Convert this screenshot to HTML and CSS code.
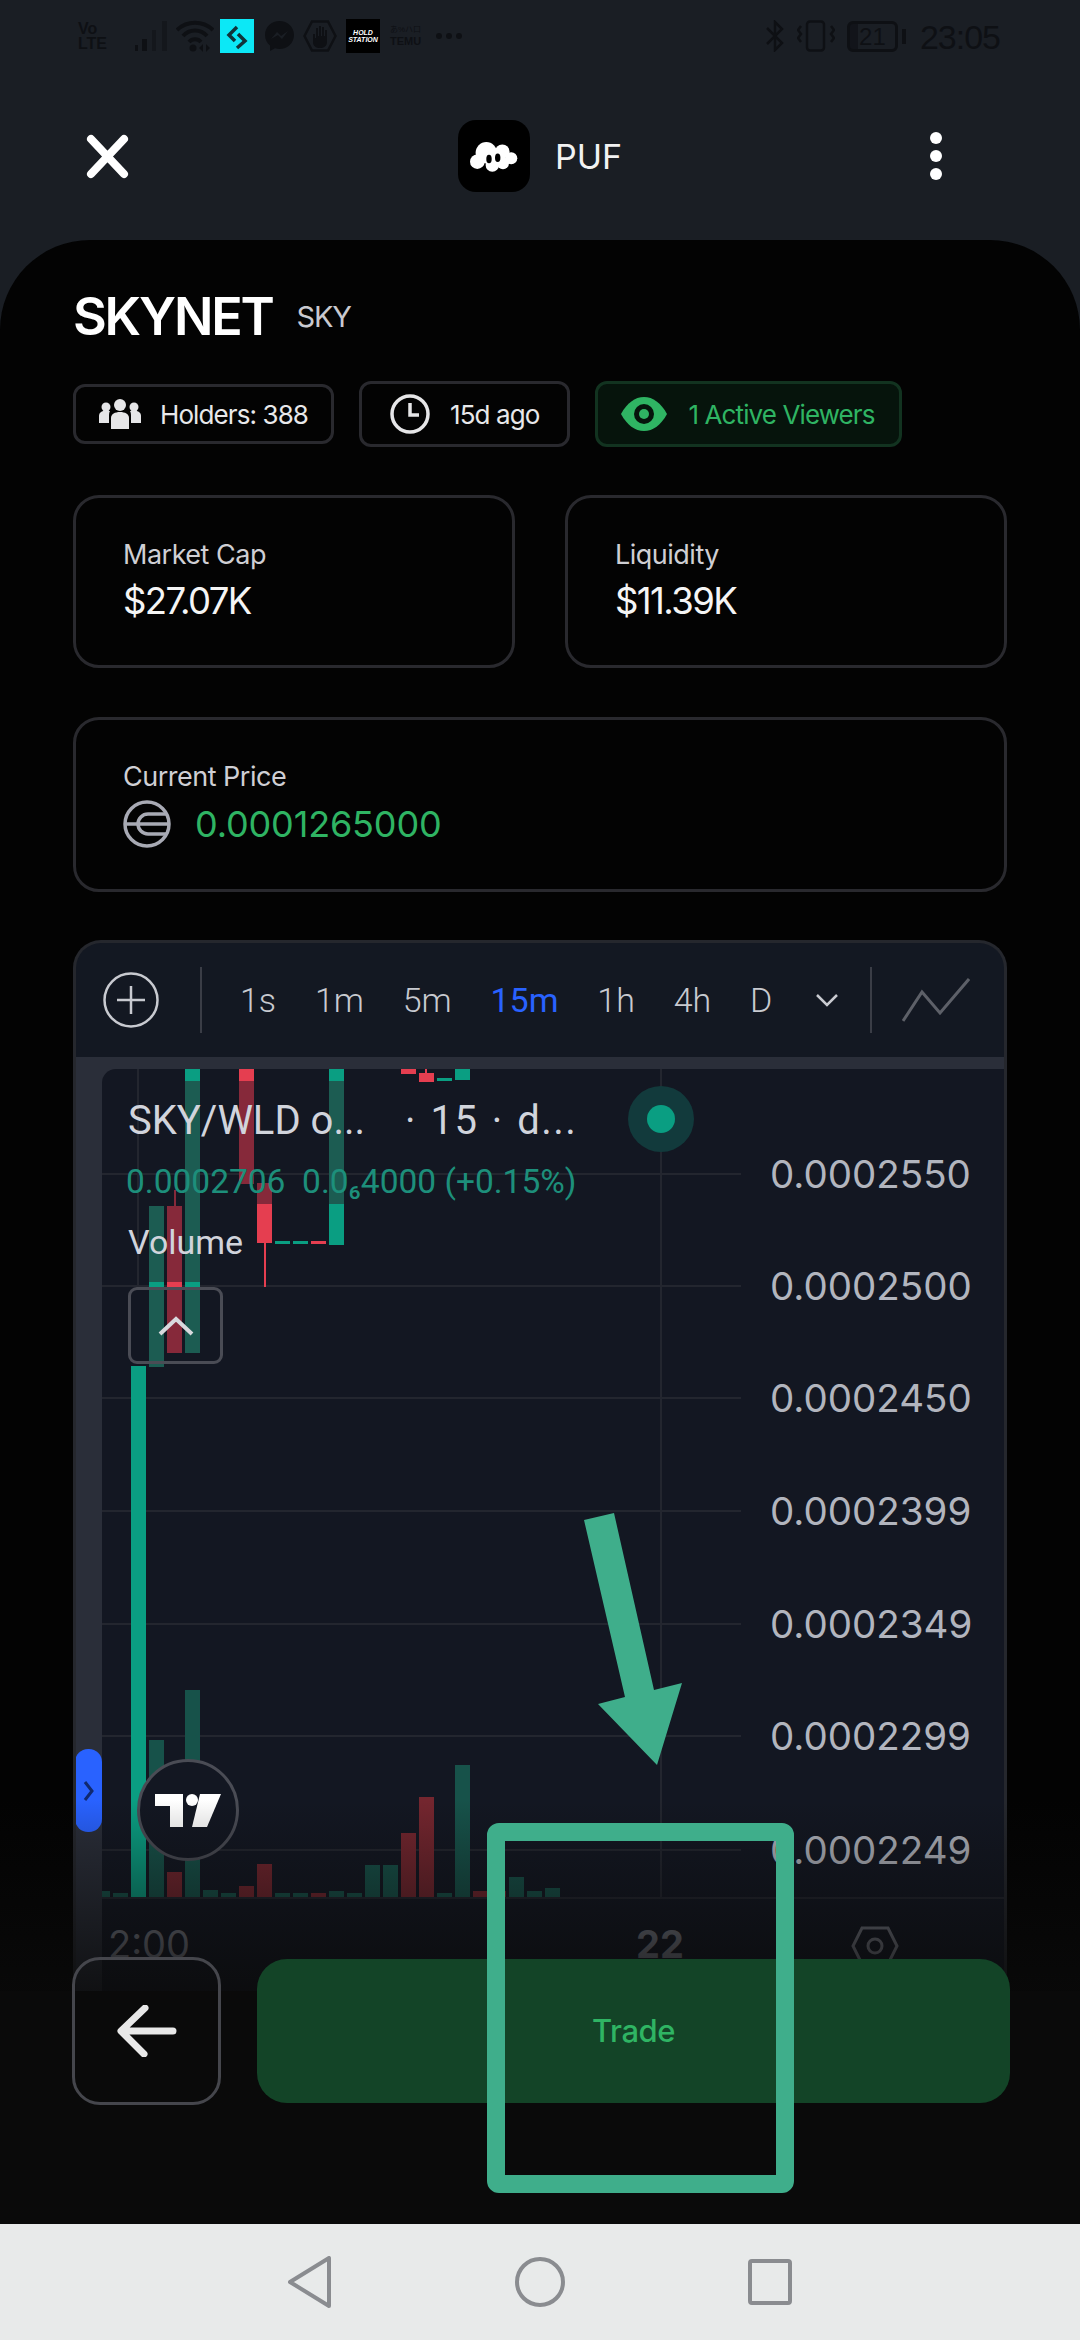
FILE: index.html
```html
<!DOCTYPE html>
<html>
  <head>
    <meta charset="utf-8" />
    <title>SKYNET</title>
    <link rel="stylesheet" href="styles.css">
  </head>
  <body>
    <div class="phone">
      <div class="status-bar">
        <div class="status-left">
          <div class="volte">Vo<br>LTE</div>
          <svg class="st-signal" width="32" height="30" viewBox="0 0 32 30"><path d="M0 24h3v6H0zM7 18h5v12H7z" fill="#0e1014"/><path d="M17 9h4v21h-4zM27 0h5v30h-5z" fill="#14171c"/></svg>
          <svg class="st-wifi" width="38" height="32" viewBox="0 0 38 32"><path d="M1 10a26 26 0 0 1 36 0M7 16a16 16 0 0 1 24 0M13 22a8 8 0 0 1 12 0" fill="none" stroke="#0e1014" stroke-width="4"/><circle cx="17" cy="28" r="3.500" fill="#0e1014"/><path d="M27 24v8l-4-4zM30 24v8l4-4z" fill="#0e1014"/></svg>
          <div class="app-tile tile-cyan">
            <svg width="34" height="34" viewBox="0 0 34 34"><path d="M17 8l-8 8 6 6M18 15l7 7-8 7" fill="none" stroke="#10343a" stroke-width="3.500"/></svg>
          </div>
          <svg width="29" height="31" viewBox="0 0 29 31"><path d="M14.500 0C6.500 0 0 6 0 14c0 4.500 2 8 5 10.500V30l5-2.700c1.400.4 2.900.7 4.500.7C22.500 28 29 22 29 14S22.500 0 14.500 0z" fill="#0e1014"/><path d="M6 18l6-7 4 4 7-5-6 8-4-4z" fill="#1a1e24"/></svg>
          <svg width="34" height="32" viewBox="0 0 34 32"><path d="M9 1.500h16L32.500 16 25 30.500H9L1.500 16z" fill="none" stroke="#0e1014" stroke-width="2.500"/><path d="M10 14v8c0 4 3 6 7 6s7-2 7-6V10h-2v6h-1V7h-2v9h-1V6h-2v10h-1V8h-2v10h-1v-4z" fill="#0e1014"/></svg>
          <div class="app-tile tile-black">HOLD<br>STATION</div>
          <div class="temu"><span>あ%ハ口</span><b>TEMU</b></div>
          <div class="more-dots"><i></i><i></i><i></i></div>
        </div>
        <div class="status-right">
          <svg width="20" height="32" viewBox="0 0 20 32"><path d="M2 8l15 15-7 7V2l7 7L2 24" fill="none" stroke="#0e1014" stroke-width="2.500"/></svg>
          <svg width="38" height="32" viewBox="0 0 38 32"><rect x="10" y="1.500" width="17" height="29" rx="3" fill="none" stroke="#0e1014" stroke-width="2.500"/><path d="M4 6l-3 4 3 4-3 4 3 4M34 6l3 4-3 4 3 4-3 4" fill="none" stroke="#0e1014" stroke-width="2.500"/></svg>
          <div class="battery"><span class="battery-body">21</span><span class="battery-tip"></span></div>
          <div class="clock">23:05</div>
        </div>
      </div>

      <header class="app-header">
        <svg class="close-icon" width="45" height="45" viewBox="0 0 45 45"><path d="M6 5l33 35M39 5L6 40" stroke="#fff" stroke-width="8" stroke-linecap="round"/></svg>
        <div class="app-name">
          <div class="app-logo">
            <svg width="48" height="32" viewBox="0 0 48 32">
              <g fill="#fff">
                <circle cx="16.300" cy="12.700" r="10.700"/><circle cx="32.300" cy="11.700" r="7.300"/><circle cx="41.300" cy="18.300" r="6"/>
                <circle cx="7.300" cy="21.700" r="7.300"/><circle cx="22.300" cy="25" r="6.700"/><circle cx="33" cy="23.300" r="6"/><circle cx="25" cy="18" r="8"/>
              </g>
              <ellipse cx="19" cy="19" rx="2.700" ry="4.300" fill="#000"/>
              <ellipse cx="27.700" cy="17.700" rx="2.700" ry="4.300" fill="#000"/>
            </svg>
          </div>
          <span class="app-title">PUF</span>
        </div>
        <div class="kebab"><i></i><i></i><i></i></div>
      </header>

      <main class="sheet">
        <div class="title-row">
          <h1 class="token-name">SKYNET</h1>
          <span class="token-symbol">SKY</span>
        </div>

        <div class="chips">
          <div class="chip chip-small">
            <svg width="42" height="30" viewBox="0 0 42 30"><g fill="#e6e6e8"><circle cx="21" cy="6" r="6"/><circle cx="7" cy="8" r="4.500"/><circle cx="35" cy="8" r="4.500"/><path d="M12 30V19c0-4 4-6 9-6s9 2 9 6v11z"/><path d="M10 24H0v-7c0-3 2-5 6-5h5c-1 2-1 3-1 6zM32 24h10v-7c0-3-2-5-6-5h-5c1 2 1 3 1 6z"/></g></svg>
            <span>Holders: 388</span>
          </div>
          <div class="chip chip-time">
            <svg width="40" height="40" viewBox="0 0 40 40"><circle cx="20" cy="20" r="18" fill="none" stroke="#e6e6e8" stroke-width="3.500"/><path d="M20 9v12h9" fill="none" stroke="#e6e6e8" stroke-width="3.500"/></svg>
            <span>15d ago</span>
          </div>
          <div class="chip chip-live">
            <svg width="46" height="34" viewBox="0 0 46 34"><path d="M0 17C6 6 14 0 23 0s17 6 23 17c-6 11-14 17-23 17S6 28 0 17z" fill="#2fb463"/><circle cx="23" cy="17" r="10" fill="#06140c"/><circle cx="23" cy="17" r="5" fill="#2fb463"/></svg>
            <span>1 Active Viewers</span>
          </div>
        </div>

        <div class="stats">
          <div class="stat-card">
            <div class="stat-label">Market Cap</div>
            <div class="stat-value">$27.07K</div>
          </div>
          <div class="stat-card">
            <div class="stat-label">Liquidity</div>
            <div class="stat-value">$11.39K</div>
          </div>
        </div>

        <div class="stat-card price-card">
          <div class="stat-label">Current Price</div>
          <div class="price-row">
            <svg width="48" height="48" viewBox="0 0 48 48"><g fill="none" stroke="#a8aab4" stroke-width="3.500"><circle cx="24" cy="24" r="22"/><path d="M43 14H25a10 10 0 0 0 0 20h18M2 24h44"/></g></svg>
            <span class="price-value">0.0001265000</span>
          </div>
        </div>

        <section class="chart-card">
          <div class="chart-toolbar">
            <svg class="tb-plus" width="56" height="56" viewBox="0 0 56 56"><circle cx="28" cy="28" r="26.500" fill="none" stroke="#c8cad0" stroke-width="2.500"/><path d="M28 14v28M14 28h28" stroke="#c8cad0" stroke-width="2.500"/></svg>
            <i class="tb-divider"></i>
            <div class="intervals">
              <span>1s</span>
              <span>1m</span>
              <span>5m</span>
              <span class="active">15m</span>
              <span>1h</span>
              <span>4h</span>
              <span>D</span>
            </div>
            <svg class="tb-caret" width="24" height="14" viewBox="0 0 24 14"><path d="M2 2l10 10L22 2" fill="none" stroke="#c8cad0" stroke-width="2.500"/></svg>
            <i class="tb-divider tb-divider-2"></i>
            <svg class="tb-line" width="68" height="44" viewBox="0 0 68 44"><path d="M1 43L20 14l18 21L67 1" fill="none" stroke="#5d6068" stroke-width="3"/></svg>
          </div>

          <div class="chart-body">
            <div class="chart-canvas">
              <svg class="plot" width="905" height="921" viewBox="102 1069 905 921">
                <g class="grid">
                  <path d="M102 1174H741M102 1286H741M102 1398H741M102 1511H741M102 1624H741M102 1736H741M102 1850H741"/>
                  <path d="M138 1069V1286M661 1069V1898"/>
                  <path d="M102 1898H1005M1005 1069V1990"/>
                </g>

                <g class="dim-up">
                  <rect x="149" y="1206" width="15" height="76"/><rect x="149" y="1288" width="15" height="79"/>
                  <rect x="185" y="1081" width="15" height="201"/><rect x="185" y="1288" width="15" height="65"/>
                  <rect x="329" y="1081" width="15" height="123"/>
                </g>
                <g class="dim-down">
                  <rect x="167" y="1206" width="15" height="76"/><rect x="167" y="1288" width="15" height="65"/>
                  <rect x="239" y="1081" width="15" height="103"/><rect x="257" y="1183" width="15" height="21"/>
                  <rect x="174" y="1190" width="2" height="16"/>
                </g>
                <g class="up">
                  <rect x="131" y="1366" width="15" height="531"/>
                  <rect x="149" y="1282" width="15" height="6"/><rect x="185" y="1282" width="15" height="6"/>
                  <rect x="185" y="1069" width="15" height="12"/><rect x="329" y="1069" width="15" height="12"/>
                  <rect x="329" y="1204" width="15" height="41"/>
                  <rect x="275" y="1241" width="15" height="3"/><rect x="293" y="1241" width="15" height="3"/>
                  <rect x="437" y="1078" width="15" height="3"/><rect x="455" y="1069" width="15" height="11"/>
                </g>
                <g class="down">
                  <rect x="167" y="1282" width="15" height="6"/><rect x="239" y="1069" width="15" height="12"/>
                  <rect x="257" y="1204" width="15" height="39"/><rect x="264" y="1243" width="2" height="44"/>
                  <rect x="311" y="1241" width="15" height="3"/>
                  <rect x="401" y="1069" width="15" height="5"/><rect x="419" y="1073" width="15" height="9"/>
                  <rect x="425" y="1069" width="2" height="4"/>
                </g>

                <g class="vol-up">
                  <rect x="102" y="1891" width="8" height="6"/><rect x="113" y="1893" width="15" height="4"/>
                  <rect x="149" y="1740" width="15" height="157"/><rect x="185" y="1690" width="15" height="207"/>
                  <rect x="203" y="1890" width="15" height="7"/><rect x="221" y="1893" width="15" height="4"/>
                  <rect x="275" y="1893" width="15" height="4"/><rect x="293" y="1893" width="15" height="4"/>
                  <rect x="329" y="1891" width="15" height="6"/><rect x="347" y="1893" width="15" height="4"/>
                  <rect x="365" y="1865" width="15" height="32"/><rect x="383" y="1865" width="15" height="32"/>
                  <rect x="437" y="1893" width="15" height="4"/><rect x="455" y="1765" width="15" height="132"/>
                  <rect x="509" y="1877" width="15" height="20"/><rect x="527" y="1891" width="15" height="6"/>
                  <rect x="545" y="1888" width="15" height="9"/>
                </g>
                <g class="vol-down">
                  <rect x="167" y="1872" width="15" height="25"/><rect x="239" y="1886" width="15" height="11"/>
                  <rect x="257" y="1864" width="15" height="33"/><rect x="311" y="1893" width="15" height="4"/>
                  <rect x="401" y="1833" width="15" height="64"/><rect x="419" y="1797" width="15" height="100"/>
                  <rect x="473" y="1891" width="15" height="6"/><rect x="491" y="1891" width="15" height="6"/>
                </g>

                <circle cx="661" cy="1119" r="33" class="dot-halo"/>
                <circle cx="661" cy="1119" r="14" class="dot-core"/>

                <g class="price-axis">
                  <text x="770" y="1188">0.0002550</text>
                  <text x="770" y="1300">0.0002500</text>
                  <text x="770" y="1412">0.0002450</text>
                  <text x="770" y="1525">0.0002399</text>
                  <text x="770" y="1638">0.0002349</text>
                  <text x="770" y="1750">0.0002299</text>
                  <text x="770" y="1864">0.0002249</text>
                </g>
                <text class="time-label" x="108" y="1958">2:00</text>
                <text class="time-label time-bold" x="660" y="1958" text-anchor="middle">22</text>
                <g class="axis-gear">
                  <path d="M862 1928h26l9 18-9 18h-26l-9-18z"/>
                  <circle cx="875" cy="1946" r="7"/>
                </g>
              </svg>

              <div class="legend">
                <div class="legend-title"><span>SKY/WLD o...</span><span class="legend-interval">· 15 · d...</span></div>
                <div class="legend-values">0.0002706&nbsp; 0.0₆4000 (+0.15%)</div>
                <div class="legend-volume">Volume</div>
                <div class="legend-toggle">
                  <svg width="36" height="20" viewBox="0 0 36 20"><path d="M2 18L18 3l16 15" fill="none" stroke="#d8d9de" stroke-width="4"/></svg>
                </div>
              </div>

              <div class="tv-badge">
                <svg width="66" height="34" viewBox="0 0 66 34"><path d="M0 1h28v33H15V13H0z" fill="#fff"/><circle cx="37" cy="7" r="6" fill="#fff"/><path d="M45 1h21L52 34H37z" fill="#fff"/></svg>
              </div>
            </div>
            <div class="side-handle">
              <svg width="12" height="22" viewBox="0 0 12 22"><path d="M2 2l7 9-7 9" fill="none" stroke="#10296f" stroke-width="3"/></svg>
            </div>
          </div>
        </section>
      </main>

      <div class="bottom-bar">
        <button class="back-button">
          <svg width="60" height="52" viewBox="0 0 60 52"><path d="M56 26H5M28 3L4 26l23 23" fill="none" stroke="#e8e8e8" stroke-width="7" stroke-linecap="round" stroke-linejoin="round"/></svg>
        </button>
        <button class="trade-button">Trade</button>
      </div>

      <svg class="annotation" width="1080" height="2340" viewBox="0 0 1080 2340">
        <rect x="496" y="1832" width="289" height="352" rx="3" fill="none" stroke="#3fae8b" stroke-width="18" stroke-linejoin="round"/>
        <path d="M584 1520L614 1513L654 1690L682 1683L657 1765L598 1704L625 1697z" fill="#3fae8b"/>
      </svg>

      <nav class="nav-bar">
        <svg width="44" height="52" viewBox="0 0 44 52"><path d="M41 2v48L2 26z" fill="none" stroke="#8a8c90" stroke-width="4" stroke-linejoin="round"/></svg>
        <svg width="50" height="50" viewBox="0 0 50 50"><circle cx="25" cy="25" r="23" fill="none" stroke="#8a8c90" stroke-width="4"/></svg>
        <svg width="44" height="46" viewBox="0 0 44 46"><rect x="2" y="2" width="40" height="42" rx="2" fill="none" stroke="#8a8c90" stroke-width="4"/></svg>
      </nav>
    </div>
  </body>
</html>
```

FILE: styles.css
```css
* {
  box-sizing: border-box;
}
html, body {
  margin: 0;
  padding: 0;
  background: #000;
}
.phone {
  position: relative;
  width: 1080px;
  height: 2340px;
  overflow: hidden;
  display: flex;
  flex-direction: column;
  background: #1a1e24;
  font-family: Inter, "Liberation Sans", sans-serif;
  color: #fff;
}

/* status bar, dimmed by the sheet's backdrop */
.status-bar {
  height: 72px;
  flex: none;
  display: flex;
  justify-content: space-between;
  align-items: center;
  padding: 0 80px 0 78px;
  color: #0e1014;
}
.status-left,
.status-right {
  display: flex;
  align-items: center;
}
.status-left {
  gap: 9px;
}
.status-right {
  gap: 12px;
}
.volte {
  width: 28px;
  font-family: "Liberation Sans", sans-serif;
  font-size: 16px;
  line-height: 15px;
  font-weight: 700;
  margin-right: 20px;
}
.st-wifi {
  margin-right: -3px;
}
.app-tile {
  width: 34px;
  height: 34px;
  flex: none;
}
.tile-cyan {
  background: #0ce8f6;
  margin-right: 2px;
}
.tile-black {
  background: #000;
  color: #fff;
  font-family: "Liberation Sans", sans-serif;
  font-size: 7px;
  font-weight: 700;
  font-style: italic;
  line-height: 7px;
  padding-top: 10px;
  text-align: center;
  white-space: nowrap;
}
.temu {
  width: 33px;
  display: flex;
  flex-direction: column;
  align-items: center;
  font-family: "Liberation Sans", "Noto Sans CJK JP", sans-serif;
  white-space: nowrap;
}
.temu span {
  font-size: 8px;
  line-height: 10px;
}
.temu b {
  font-size: 11px;
  line-height: 12px;
}
.more-dots {
  display: flex;
  gap: 4px;
  margin-left: 5px;
}
.more-dots i {
  width: 6px;
  height: 6px;
  border-radius: 50%;
  background: #0e1014;
}
.battery {
  display: flex;
  align-items: center;
  gap: 4px;
}
.battery-body {
  width: 51px;
  height: 31px;
  border: 3px solid #0e1014;
  border-radius: 6px;
  font-size: 24px;
  line-height: 25px;
  text-align: center;
  font-family: "Liberation Sans", sans-serif;
  background: linear-gradient(to right, #12141a 0, #12141a 8px, transparent 8px);
}
.battery-tip {
  width: 4px;
  height: 15px;
  background: #0e1014;
}
.clock {
  font-family: "Liberation Sans", sans-serif;
  font-size: 34px;
  letter-spacing: -1px;
  margin-left: 2px;
  padding-top: 2px;
}

.app-header {
  height: 168px;
  flex: none;
  display: grid;
  grid-template-columns: 1fr auto 1fr;
  align-items: center;
  padding: 0 85px;
}
.app-name {
  display: flex;
  align-items: center;
  gap: 25px;
}
.app-logo {
  width: 72px;
  height: 72px;
  background: #000;
  border-radius: 18px;
  display: flex;
  align-items: center;
  justify-content: center;
}
.app-title {
  font-size: 34px;
  color: #f2f2f2;
}
.kebab {
  justify-self: end;
  margin-right: 53px;
  display: flex;
  flex-direction: column;
  gap: 6px;
}
.kebab i {
  display: block;
  width: 12px;
  height: 12px;
  border-radius: 50%;
  background: #fff;
}

.sheet {
  flex: 1;
  min-height: 0;
  background: #030303;
  border-radius: 90px 90px 0 0;
  padding: 48px 73px 0;
  display: flex;
  flex-direction: column;
}
.title-row {
  height: 56px;
  display: flex;
  align-items: center;
  gap: 24px;
}
.token-name {
  margin: 0;
  font-size: 52px;
  font-weight: 600;
  letter-spacing: -2.200px;
}
.token-symbol {
  font-size: 29px;
  color: #c9c9cf;
  letter-spacing: -1.200px;
}

.chips {
  margin-top: 37px;
  height: 66px;
  display: flex;
  align-items: center;
  gap: 25px;
}
.chip {
  height: 66px;
  display: flex;
  align-items: center;
  padding: 0 28px;
  border: 3px solid #29292e;
  border-radius: 12px;
  font-size: 26px;
  letter-spacing: -0.900px;
  color: #e8e8ea;
}
.chip-small {
  height: 60px;
  gap: 19px;
  padding: 0 23px;
}
.chip-time {
  gap: 20px;
}
.chip-live {
  gap: 21px;
  padding: 0 24px 0 23px;
  border-color: #123320;
  background: #06140c;
  color: #2fb463;
}

.stats {
  margin-top: 48px;
  display: grid;
  grid-template-columns: 1fr 1fr;
  gap: 50px;
}
.stat-card {
  height: 173px;
  border: 3px solid #29292e;
  border-radius: 26px;
  padding: 40px 47px 0;
}
.stat-label {
  font-size: 27px;
  line-height: 34px;
  color: #cfcfd4;
  letter-spacing: -0.500px;
}
.stat-value {
  font-size: 36.500px;
  line-height: 58px;
  letter-spacing: -1.600px;
  color: #f5f5f5;
}
.price-card {
  margin-top: 49px;
  height: 175px;
}
.price-row {
  display: flex;
  align-items: center;
  gap: 24px;
  margin-top: 6px;
}
.price-value {
  font-size: 36px;
  color: #2fb463;
  letter-spacing: -0.150px;
}

/* chart widget */
.chart-card {
  margin-top: 48px;
  flex: 1;
  min-height: 0;
  background: #131822;
  border: 3px solid #25272d;
  border-bottom: none;
  border-radius: 28px 28px 0 0;
  display: flex;
  flex-direction: column;
  overflow: hidden;
}
.chart-toolbar {
  height: 114px;
  flex: none;
  display: flex;
  align-items: center;
  padding-left: 27px;
  color: #c8cad0;
}
.tb-divider {
  width: 2px;
  height: 66px;
  background: #3a3d46;
  margin-left: 41px;
}
.intervals {
  display: flex;
  gap: 38.800px;
  margin-left: 38px;
  font-family: Roboto, sans-serif;
  font-size: 34px;
  font-weight: 300;
}
.intervals .active {
  color: #2962ff;
  font-weight: 400;
}
.tb-caret {
  margin-left: 43px;
}
.tb-divider-2 {
  margin-left: 31px;
}
.tb-line {
  margin-left: 30px;
}
.chart-body {
  flex: 1;
  min-height: 0;
  position: relative;
  background: #2a2e39;
  padding: 12px 0 0 26px;
}
.chart-canvas {
  position: relative;
  height: 100%;
  background: #131722;
  border-radius: 14px 0 0 0;
  overflow: hidden;
}
.plot {
  display: block;
}
.grid path {
  fill: none;
  stroke: #23262f;
  stroke-width: 2;
}
.up { fill: #0a9e82; }
.down { fill: #e53e50; }
.dim-up { fill: #1c5c52; }
.dim-down { fill: #86293a; }
.vol-up { fill: #17524a; }
.vol-down { fill: #74262f; }
.dot-halo { fill: #123a3c; }
.dot-core { fill: #0a9e82; }
.price-axis text {
  font-family: Inter, sans-serif;
  font-size: 38.500px;
  fill: #b2b5be;
}
.time-label {
  font-family: Inter, sans-serif;
  font-size: 38px;
  fill: #787b86;
}
.time-bold {
  font-weight: 700;
}
.axis-gear {
  fill: none;
  stroke: #787b86;
  stroke-width: 3;
}
.legend {
  position: absolute;
  top: 27px;
  left: 26px;
  display: flex;
  flex-direction: column;
  font-family: Roboto, sans-serif;
}
.legend-title {
  display: flex;
  gap: 40px;
  font-size: 40px;
  line-height: 50px;
  color: #d1d4dc;
  white-space: nowrap;
}
.legend-interval {
  letter-spacing: 1.500px;
  word-spacing: 2px;
}
.legend-values {
  margin-top: 15px;
  margin-left: -2px;
  font-size: 33.500px;
  line-height: 42px;
  color: #1d8f7b;
  white-space: nowrap;
}
.legend-volume {
  margin-top: 18px;
  font-size: 34px;
  line-height: 42px;
  color: #d1d4dc;
}
.legend-toggle {
  margin-top: 24px;
  width: 95px;
  height: 77px;
  border: 3px solid #4a4c55;
  border-radius: 9px;
  display: flex;
  align-items: center;
  justify-content: center;
}
.tv-badge {
  position: absolute;
  left: 35px;
  top: 690px;
  width: 102px;
  height: 102px;
  border: 3px solid #4a4c55;
  border-radius: 50%;
  background: #131722;
  display: flex;
  align-items: center;
  justify-content: center;
}
.side-handle {
  position: absolute;
  left: -1px;
  top: 692px;
  width: 27px;
  height: 83px;
  background: #2962ff;
  border-radius: 13px;
  display: flex;
  align-items: center;
  justify-content: center;
}

/* bottom action bar with the fade over the chart */
.bottom-bar {
  position: absolute;
  left: 0;
  right: 0;
  bottom: 116px;
  height: 424px;
  display: flex;
  align-items: flex-end;
  gap: 36px;
  padding: 0 70px 119px 72px;
  background: linear-gradient(to bottom, rgba(10, 10, 10, 0), rgba(10, 10, 10, 0.8) 45%, #0a0a0a 45%);
}
.back-button {
  width: 149px;
  height: 148px;
  flex: none;
  background: transparent;
  border: 3px solid #45464c;
  border-radius: 28px;
  display: flex;
  align-items: center;
  justify-content: center;
  padding: 0;
}
.trade-button {
  flex: 1;
  height: 144px;
  margin-bottom: 2px;
  border: none;
  border-radius: 30px;
  background: #134427;
  color: #2fb463;
  font-family: Inter, sans-serif;
  font-size: 31px;
  font-weight: 500;
  letter-spacing: -0.500px;
  padding-bottom: 3px;
}

.annotation {
  position: absolute;
  left: 0;
  top: 0;
  pointer-events: none;
}

.nav-bar {
  height: 116px;
  flex: none;
  background: #e8eaea;
  display: flex;
  align-items: center;
  justify-content: center;
  gap: 183px;
  z-index: 1;
}
```
